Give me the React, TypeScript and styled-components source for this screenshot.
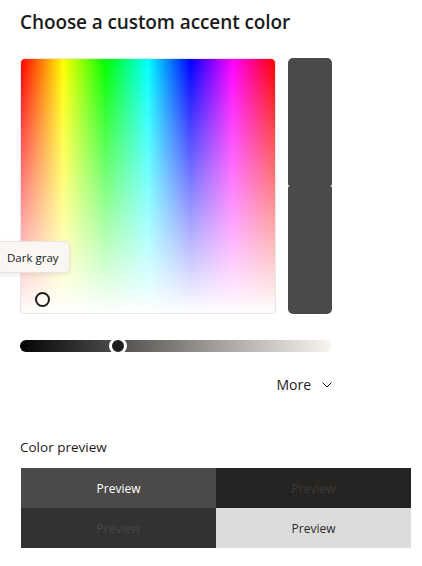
import styled, { createGlobalStyle } from "styled-components";

const GlobalStyle = createGlobalStyle`
    body {
        margin: 0;
        background: #ffffff;
        font-family: "Open Sans", "Noto Sans", sans-serif;
        color: #1b1b1b;
    }
`;

const Page = styled.div`
    position: relative;
    width: 422px;
    height: 566px;
    padding: 8px 20px 0 20px;
    box-sizing: border-box;
`;

const Title = styled.h1`
    margin: 0 0 22px 0;
    font-size: 19px;
    font-weight: 600;
    line-height: 28px;
    letter-spacing: -0.1px;
`;

const PickerRow = styled.div`
    display: flex;
    gap: 12px;
`;

const Spectrum = styled.div`
    position: relative;
    width: 256px;
    height: 256px;
    box-sizing: border-box;
    border-radius: 5px;
    border: 1px solid #e6e6e6;
    background:
        linear-gradient(to bottom, rgba(255, 255, 255, 0), #ffffff),
        linear-gradient(to right, #ff0000, #ffff00, #00ff00, #00ffff, #0000ff, #ff00ff, #ff0000);
`;

const SpectrumThumb = styled.div`
    position: absolute;
    left: 14px;
    bottom: 6px;
    width: 11px;
    height: 11px;
    border-radius: 50%;
    border: 2px solid #1e1e1e;
`;

const Swatches = styled.div`
    display: flex;
    flex-direction: column;
    width: 44px;
`;

const Swatch = styled.div<{ $top?: boolean }>`
    flex: 1;
    background: #4c4a48;
    border-radius: ${(p) => (p.$top ? "5px 5px 2px 2px" : "2px 2px 5px 5px")};
`;

const Slider = styled.div`
    position: relative;
    margin-top: 26px;
    width: 312px;
    height: 12px;
    border-radius: 6px;
    background: linear-gradient(to right, #050505, #4c4a48 30%, #a8a39e 65%, #faf6f1);
`;

const SliderThumb = styled.div`
    position: absolute;
    left: 89px;
    top: -3px;
    width: 12px;
    height: 12px;
    border-radius: 50%;
    background: #1e1e1e;
    border: 3px solid #ffffff;
`;

const MoreRow = styled.div`
    display: flex;
    justify-content: flex-end;
    width: 312px;
    margin-top: 23px;
`;

const MoreButton = styled.button`
    display: flex;
    align-items: center;
    gap: 11px;
    padding: 0;
    border: none;
    background: none;
    font-family: inherit;
    font-size: 14px;
    color: #1b1b1b;
`;

const SectionLabel = styled.div`
    margin-top: 43px;
    font-size: 13.5px;
    line-height: 20px;
    color: #1b1b1b;
`;

const PreviewGrid = styled.div`
    display: grid;
    grid-template-columns: 195px 195px;
    grid-auto-rows: 40px;
    margin: 11px 0 0 1px;
`;

const PreviewCell = styled.div<{ $bg: string; $fg: string }>`
    display: flex;
    align-items: center;
    justify-content: center;
    background: ${(p) => p.$bg};
    color: ${(p) => p.$fg};
    font-size: 12px;
    font-weight: 500;
`;

const Tooltip = styled.div`
    position: absolute;
    left: -4px;
    top: 241px;
    padding: 0 10px;
    height: 30px;
    display: flex;
    align-items: center;
    border-radius: 5px;
    border: 1px solid #e8e4e0;
    background: #f9f6f3;
    font-size: 11.5px;
    color: #1b1b1b;
    box-shadow: 0 2px 4px rgba(0, 0, 0, 0.08);
`;

const previews = [
    { bg: "#4c4a48", fg: "#ffffff" },
    { bg: "#262422", fg: "#3c3a38" },
    { bg: "#323232", fg: "#464646" },
    { bg: "#dcdcdc", fg: "#2a2a2a" },
];

const Chevron = () => (
    <svg width="10" height="6" viewBox="0 0 10 6" fill="none">
        <path d="M0.5 0.5 L5 5 L9.5 0.5" stroke="#1b1b1b" strokeWidth="1" />
    </svg>
);

const App = () => (
    <Page>
        <GlobalStyle />
        <Title>Choose a custom accent color</Title>
        <PickerRow>
            <Spectrum>
                <SpectrumThumb />
            </Spectrum>
            <Swatches>
                <Swatch $top />
                <Swatch />
            </Swatches>
        </PickerRow>
        <Slider>
            <SliderThumb />
        </Slider>
        <MoreRow>
            <MoreButton>
                More <Chevron />
            </MoreButton>
        </MoreRow>
        <SectionLabel>Color preview</SectionLabel>
        <PreviewGrid>
            {previews.map((c, i) => (
                <PreviewCell key={i} $bg={c.bg} $fg={c.fg}>
                    Preview
                </PreviewCell>
            ))}
        </PreviewGrid>
        <Tooltip>Dark gray</Tooltip>
    </Page>
);

export default App;
